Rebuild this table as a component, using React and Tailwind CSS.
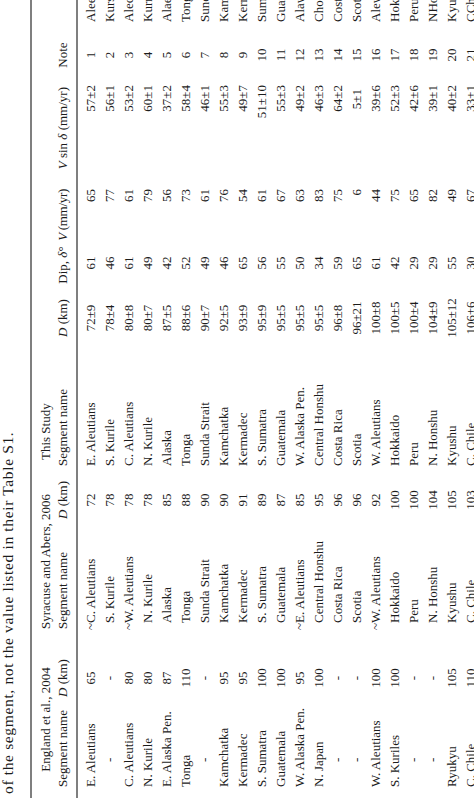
import React from 'react';

// rows: England name, England D, Syracuse name, Syracuse D, segment, D, dip, V, V sin d, note, model
const rows = [
    ['E. Aleutians', '65', '~C. Aleutians', '72', 'E. Aleutians', '72±9', '61', '65', '57±2', '1', 'Alee'],
    ['-', '-', 'S. Kurile', '78', 'S. Kurile', '78±4', '46', '77', '56±1', '2', 'Kurs'],
    ['C. Aleutians', '80', '~W. Aleutians', '78', 'C. Aleutians', '80±8', '61', '61', '53±2', '3', 'Alec'],
    ['N. Kurile', '80', 'N. Kurile', '78', 'N. Kurile', '80±7', '49', '79', '60±1', '4', 'Kurn'],
    ['E. Alaska Pen.', '87', 'Alaska', '85', 'Alaska', '87±5', '42', '56', '37±2', '5', 'Alae'],
    ['Tonga', '110', 'Tonga', '88', 'Tonga', '88±6', '52', '73', '58±4', '6', 'Tong'],
    ['-', '-', 'Sunda Strait', '90', 'Sunda Strait', '90±7', '49', '61', '46±1', '7', 'Sund'],
    ['Kamchatka', '95', 'Kamchatka', '90', 'Kamchatka', '92±5', '46', '76', '55±3', '8', 'Kamk'],
    ['Kermadec', '95', 'Kermadec', '91', 'Kermadec', '93±9', '65', '54', '49±7', '9', 'Kerm'],
    ['S. Sumatra', '100', 'S. Sumatra', '89', 'S. Sumatra', '95±9', '56', '61', '51±10', '10', 'Sums'],
    ['Guatemala', '100', 'Guatemala', '87', 'Guatemala', '95±5', '55', '67', '55±3', '11', 'Guat'],
    ['W. Alaska Pen.', '95', '~E. Aleutians', '85', 'W. Alaska Pen.', '95±5', '50', '63', '49±2', '12', 'Alaw'],
    ['N. Japan', '100', 'Central Honshu', '95', 'Central Honshu', '95±5', '34', '83', '46±3', '13', 'Chon'],
    ['-', '-', 'Costa Rica', '96', 'Costa Rica', '96±8', '59', '75', '64±2', '14', 'Cost'],
    ['-', '-', 'Scotia', '96', 'Scotia', '96±21', '65', '6', '5±1', '15', 'Scot'],
    ['W. Aleutians', '100', '~W. Aleutians', '92', 'W. Aleutians', '100±8', '61', '44', '39±6', '16', 'Alew'],
    ['S. Kuriles', '100', 'Hokkaido', '100', 'Hokkaido', '100±5', '42', '75', '52±3', '17', 'Hokk'],
    ['-', '-', 'Peru', '100', 'Peru', '100±4', '29', '65', '42±6', '18', 'Peru'],
    ['-', '-', 'N. Honshu', '104', 'N. Honshu', '104±9', '29', '82', '39±1', '19', 'NHon'],
    ['Ryukyu', '105', 'Kyushu', '105', 'Kyushu', '105±12', '55', '49', '40±2', '20', 'Kyus'],
    ['C. Chile', '110', 'C. Chile', '103', 'C. Chile', '106±6', '30', '67', '33±1', '21', 'CChi'],
];

const grid = "grid grid-cols-[89px_40px_143px_30px_142px_50px_60px_44px_104px_60px_80px] pl-[11px]";

const Row = ({ r }) => {
    const tilde = r[2].startsWith('~');
    return (
        <div className={`${grid} h-[19px] leading-[19px] whitespace-nowrap`}>
            {r[0] === '-' ? <div className="pl-[25px]">-</div> : <div>{r[0]}</div>}
            <div className="flex justify-center">{r[1]}</div>
            <div className="pl-[35px]">
                {tilde ? (<><span className="-ml-[7px]">~</span>{r[2].slice(1)}</>) : r[2]}
            </div>
            <div className="flex justify-center">{r[3]}</div>
            <div className="pl-[19px]">{r[4]}</div>
            <div className="flex justify-center">{r[5]}</div>
            <div className="flex justify-center">{r[6]}</div>
            <div className="flex justify-end">{r[7]}</div>
            <div className={`flex justify-end ${r[8] === '5±1' ? 'pr-[4px]' : ''}`}>{r[8]}</div>
            <div className="flex justify-center">{r[9]}</div>
            <div className="pl-[3px] overflow-hidden">{r[10]}</div>
        </div>
    );
};

const App = () => {
    return (
        <div className="w-[474px] h-[801px] overflow-hidden bg-white">
            <div className="w-[801px] h-[474px] origin-top-left translate-y-[801px] -rotate-90 font-['Liberation_Serif',serif] text-[13px] text-[#1c1c1c]">
                <div className="-mt-[3px] h-[16px] leading-[16px] text-[15.5px] tracking-[0.65px] pl-[4px] whitespace-nowrap">
                    of the segment, not the value listed in their Table S1.
                </div>
                <div className="mt-[14px] h-[2px] bg-[#7f7f7f]" />

                <div className={`${grid} mt-[5px] h-[17px] leading-[17px] whitespace-nowrap`}>
                    <div className="col-span-2 flex justify-center pl-[6px]">England et al., 2004</div>
                    <div className="col-span-2 pl-[29px]">Syracuse and Abers, 2006</div>
                    <div className="pl-[25px]">This Study</div>
                </div>
                <div className={`${grid} h-[17px] leading-[17px] whitespace-nowrap`}>
                    <div>Segment name</div>
                    <div className="flex justify-center"><span><i>D</i> (km)</span></div>
                    <div className="pl-[29px]">Segment name</div>
                    <div className="flex justify-center"><span><i>D</i> (km)</span></div>
                    <div className="pl-[19px]">Segment name</div>
                    <div className="flex justify-center"><span><i>D</i> (km)</span></div>
                    <div className="flex justify-center pr-[4px]"><span>Dip, <i>δ</i>°</span></div>
                    <div className="flex justify-end tracking-[-0.3px]"><span><i>V</i> (mm/yr)</span></div>
                    <div className="flex justify-end pr-[2px]"><span><i>V</i> sin <i>δ</i> (mm/yr)</span></div>
                    <div className="flex justify-center">Note</div>
                    <div />
                </div>
                <div className="mt-[5px] h-[1.5px] bg-[#7f7f7f]" />

                <div className="mt-[3.5px]">
                    {rows.map((r) => (
                        <Row key={r[9]} r={r} />
                    ))}
                </div>
            </div>
        </div>
    );
};

export default App;
